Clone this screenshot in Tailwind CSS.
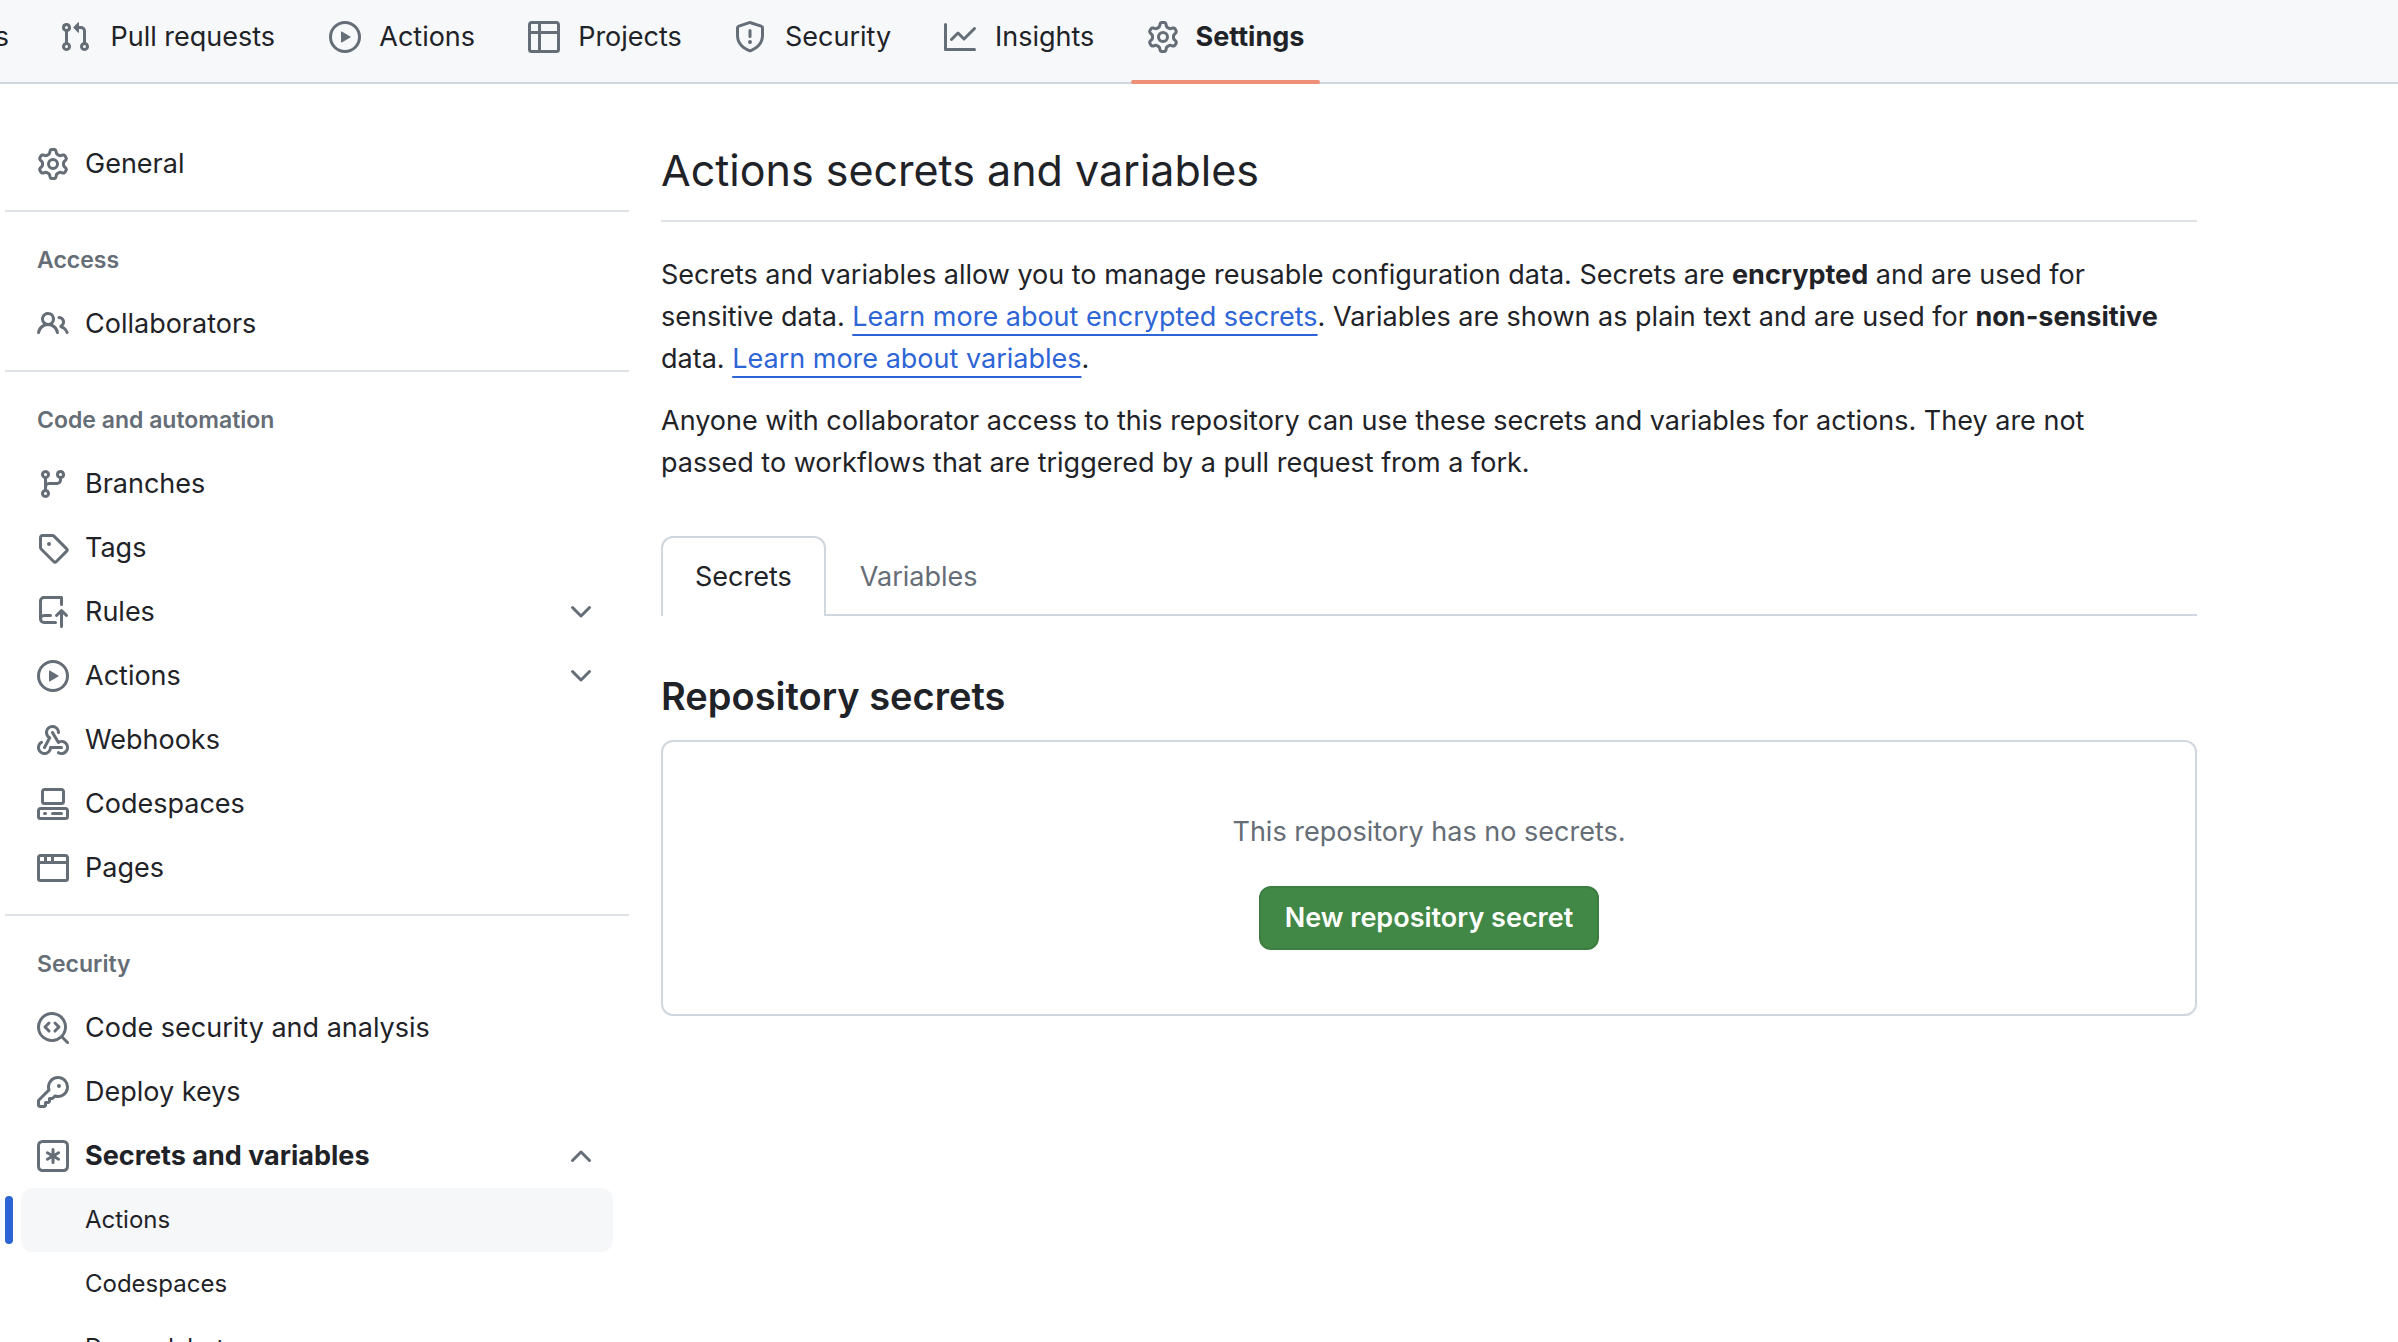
<!DOCTYPE html>
<html lang="en">

<head>
    <meta charset="UTF-8">
    <meta name="viewport" content="width=device-width, initial-scale=1.0">
    <title>Actions secrets and variables</title>
    <script src="https://cdn.jsdelivr.net/npm/@tailwindcss/browser@4"></script>
</head>

<body class="h-screen overflow-hidden bg-white font-['Inter','Liberation_Sans',sans-serif] text-[27px] leading-[42px] text-[#1f2328]">

    <!-- Icon sprite -->
    <svg class="hidden" aria-hidden="true">
        <symbol id="gear" viewBox="0 0 16 16"><path d="M8 0a8.2 8.2 0 0 1 .701.031C9.444.095 9.99.645 10.16 1.29l.288 1.107c.018.066.079.158.212.224.231.114.454.243.668.386.123.082.233.09.299.071l1.103-.303c.644-.176 1.392.021 1.82.63.27.385.506.792.704 1.218.315.675.111 1.422-.364 1.891l-.814.806c-.049.048-.098.147-.088.294.016.257.016.515 0 .772-.01.147.038.246.088.294l.814.806c.475.469.679 1.216.364 1.891a7.977 7.977 0 0 1-.704 1.217c-.428.61-1.176.807-1.82.63l-1.102-.302c-.067-.019-.177-.011-.3.071a5.909 5.909 0 0 1-.668.386c-.133.066-.194.158-.211.224l-.29 1.106c-.168.646-.715 1.196-1.458 1.26a8.006 8.006 0 0 1-1.402 0c-.743-.064-1.289-.614-1.458-1.26l-.289-1.106c-.018-.066-.079-.158-.212-.224a5.738 5.738 0 0 1-.668-.386c-.123-.082-.233-.09-.299-.071l-1.103.303c-.644.176-1.392-.021-1.82-.63a8.12 8.12 0 0 1-.704-1.218c-.315-.675-.111-1.422.363-1.891l.815-.806c.05-.048.098-.147.088-.294a6.214 6.214 0 0 1 0-.772c.01-.147-.038-.246-.088-.294l-.815-.806C.635 6.045.431 5.298.746 4.623a7.92 7.92 0 0 1 .704-1.217c.428-.61 1.176-.807 1.82-.63l1.102.302c.067.019.177.011.3-.071.214-.143.437-.272.668-.386.133-.066.194-.158.211-.224l.29-1.106C6.009.645 6.556.095 7.299.03 7.53.01 7.764 0 8 0Zm-.571 1.525c-.036.003-.108.036-.137.146l-.289 1.105c-.147.561-.549.967-.998 1.189-.173.086-.34.183-.5.29-.417.278-.97.423-1.529.27l-1.103-.303c-.109-.03-.175.016-.195.045-.22.312-.412.644-.573.99-.014.031-.021.11.059.19l.815.806c.411.406.562.957.53 1.456a4.709 4.709 0 0 0 0 .582c.032.499-.119 1.05-.53 1.456l-.815.806c-.081.08-.073.159-.059.19.162.346.353.677.573.989.02.03.085.076.195.046l1.102-.303c.56-.153 1.113-.008 1.53.27.161.107.328.204.501.29.447.222.85.629.997 1.189l.289 1.105c.029.109.101.143.137.146a6.6 6.6 0 0 0 1.142 0c.036-.003.108-.036.137-.146l.289-1.105c.147-.561.549-.967.998-1.189.173-.086.34-.183.5-.29.417-.278.97-.423 1.529-.27l1.103.303c.109.029.175-.016.195-.045.22-.313.411-.644.573-.99.014-.031.021-.11-.059-.19l-.815-.806c-.411-.406-.562-.957-.53-1.456a4.709 4.709 0 0 0 0-.582c-.032-.499.119-1.05.53-1.456l.815-.806c.081-.08.073-.159.059-.19a6.464 6.464 0 0 0-.573-.989c-.02-.03-.085-.076-.195-.046l-1.102.303c-.56.153-1.113.008-1.53-.27a4.44 4.44 0 0 0-.501-.29c-.447-.222-.85-.629-.997-1.189l-.289-1.105c-.029-.11-.101-.143-.137-.146a6.6 6.6 0 0 0-1.142 0ZM11 8a3 3 0 1 1-6 0 3 3 0 0 1 6 0ZM9.5 8a1.5 1.5 0 1 0-3.001.001A1.5 1.5 0 0 0 9.5 8Z" /></symbol>
        <symbol id="pull-request" viewBox="0 0 16 16"><path d="M1.5 3.25a2.25 2.25 0 1 1 3 2.122v5.256a2.251 2.251 0 1 1-1.5 0V5.372A2.25 2.25 0 0 1 1.5 3.25Zm5.677-.177L9.573.677A.25.25 0 0 1 10 .854V2.5h1A2.5 2.5 0 0 1 13.5 5v5.628a2.251 2.251 0 1 1-1.5 0V5a1 1 0 0 0-1-1h-1v1.646a.25.25 0 0 1-.427.177L7.177 3.427a.25.25 0 0 1 0-.354ZM3.75 2.5a.75.75 0 1 0 0 1.5.75.75 0 0 0 0-1.5Zm0 9.5a.75.75 0 1 0 0 1.5.75.75 0 0 0 0-1.5Zm8.25.75a.75.75 0 1 0 1.5 0 .75.75 0 0 0-1.5 0Z" /></symbol>
        <symbol id="play" viewBox="0 0 16 16"><path d="M8 0a8 8 0 1 1 0 16A8 8 0 0 1 8 0ZM1.5 8a6.5 6.5 0 1 0 13 0 6.5 6.5 0 0 0-13 0Zm4.879-2.773 4.264 2.559a.25.25 0 0 1 0 .428l-4.264 2.559A.25.25 0 0 1 6 10.559V5.442a.25.25 0 0 1 .379-.215Z" /></symbol>
        <symbol id="table" viewBox="0 0 16 16"><path d="M0 1.75C0 .784.784 0 1.75 0h12.5C15.216 0 16 .784 16 1.75v12.5A1.75 1.75 0 0 1 14.25 16H1.75A1.75 1.75 0 0 1 0 14.25ZM6.5 6.5v8h7.75a.25.25 0 0 0 .25-.25V6.5Zm8-1.5V1.75a.25.25 0 0 0-.25-.25H6.5V5Zm-13 1.5v7.75c0 .138.112.25.25.25H5v-8ZM5 5V1.5H1.75a.25.25 0 0 0-.25.25V5Z" /></symbol>
        <symbol id="shield" viewBox="0 0 16 16"><path d="M7.467.133a1.748 1.748 0 0 1 1.066 0l5.25 1.68A1.75 1.75 0 0 1 15 3.48V7c0 1.566-.32 3.182-1.303 4.682-.983 1.498-2.585 2.813-5.032 3.855a1.697 1.697 0 0 1-1.33 0c-2.447-1.042-4.049-2.357-5.032-3.855C1.32 10.182 1 8.566 1 7V3.48a1.75 1.75 0 0 1 1.217-1.667Zm.61 1.429a.25.25 0 0 0-.153 0l-5.25 1.68a.25.25 0 0 0-.174.238V7c0 1.358.275 2.666 1.057 3.86.784 1.194 2.121 2.34 4.366 3.297a.196.196 0 0 0 .154 0c2.245-.956 3.582-2.104 4.366-3.298C13.225 9.666 13.5 8.36 13.5 7V3.48a.251.251 0 0 0-.174-.237l-5.25-1.68ZM8.75 4.75v3a.75.75 0 0 1-1.5 0v-3a.75.75 0 0 1 1.5 0ZM9 10.5a1 1 0 1 1-2 0 1 1 0 0 1 2 0Z" /></symbol>
        <symbol id="graph" viewBox="0 0 16 16"><path d="M1.5 1.75V13.5h13.75a.75.75 0 0 1 0 1.5H.75a.75.75 0 0 1-.75-.75V1.75a.75.75 0 0 1 1.5 0Zm14.28 2.53-5.25 5.25a.75.75 0 0 1-1.06 0L7 7.06 4.28 9.78a.751.751 0 0 1-1.042-.018.751.751 0 0 1-.018-1.042l3.25-3.25a.75.75 0 0 1 1.06 0L10 7.94l4.72-4.72a.751.751 0 0 1 1.042.018.751.751 0 0 1 .018 1.042Z" /></symbol>
        <symbol id="people" viewBox="0 0 16 16"><path d="M2 5.5a3.5 3.5 0 1 1 5.898 2.549 5.508 5.508 0 0 1 3.034 4.084.75.75 0 1 1-1.482.235 4 4 0 0 0-7.9 0 .75.75 0 0 1-1.482-.236A5.507 5.507 0 0 1 3.102 8.05 3.493 3.493 0 0 1 2 5.5ZM11 4a3.001 3.001 0 0 1 2.22 5.018 5.01 5.01 0 0 1 2.56 3.012.749.749 0 0 1-.885.954.752.752 0 0 1-.549-.514 3.507 3.507 0 0 0-2.522-2.372.75.75 0 0 1-.574-.73v-.352a.75.75 0 0 1 .416-.672A1.5 1.5 0 0 0 11 5.5.75.75 0 0 1 11 4Zm-5.5-.5a2 2 0 1 0-.001 3.999A2 2 0 0 0 5.5 3.5Z" /></symbol>
        <symbol id="branch" viewBox="0 0 16 16"><path d="M9.5 3.25a2.25 2.25 0 1 1 3 2.122V6A2.5 2.5 0 0 1 10 8.5H6a1 1 0 0 0-1 1v1.128a2.251 2.251 0 1 1-1.5 0V5.372a2.25 2.25 0 1 1 1.5 0v1.836A2.493 2.493 0 0 1 6 7h4a1 1 0 0 0 1-1v-.628A2.25 2.25 0 0 1 9.5 3.25Zm-6 0a.75.75 0 1 0 1.5 0 .75.75 0 0 0-1.5 0Zm8.25-.75a.75.75 0 1 0 0 1.5.75.75 0 0 0 0-1.5ZM4.25 12a.75.75 0 1 0 0 1.5.75.75 0 0 0 0-1.5Z" /></symbol>
        <symbol id="tag" viewBox="0 0 16 16"><path d="M1 7.775V2.75C1 1.784 1.784 1 2.75 1h5.025c.464 0 .91.184 1.238.513l6.25 6.25a1.75 1.75 0 0 1 0 2.474l-5.026 5.026a1.75 1.75 0 0 1-2.474 0l-6.25-6.25A1.752 1.752 0 0 1 1 7.775Zm1.5 0c0 .066.026.13.073.177l6.25 6.25a.25.25 0 0 0 .354 0l5.025-5.025a.25.25 0 0 0 0-.354l-6.25-6.25a.25.25 0 0 0-.177-.073H2.75a.25.25 0 0 0-.25.25ZM6 5a1 1 0 1 1 0 2 1 1 0 0 1 0-2Z" /></symbol>
        <symbol id="repo-push" viewBox="0 0 16 16"><path d="M1 2.5A2.5 2.5 0 0 1 3.5 0h8.75a.75.75 0 0 1 .75.75v3.5a.75.75 0 0 1-1.5 0V1.5h-8a1 1 0 0 0-1 1v6.708A2.493 2.493 0 0 1 3.5 9h3.25a.75.75 0 0 1 0 1.5H3.5a1 1 0 0 0 0 2h5.75a.75.75 0 0 1 0 1.5H3.5A2.5 2.5 0 0 1 1 11.5Zm13.23 7.79h-.001l-1.224-1.224v6.184a.75.75 0 0 1-1.5 0V9.066L10.28 10.29a.75.75 0 0 1-1.06-1.061l2.505-2.504a.75.75 0 0 1 1.06 0L15.29 9.23a.751.751 0 0 1-.018 1.042.751.751 0 0 1-1.042.018Z" /></symbol>
        <symbol id="webhook" viewBox="0 0 16 16"><path d="M5.5 4.25a2.25 2.25 0 0 1 4.5 0 .75.75 0 0 0 1.5 0 3.75 3.75 0 1 0-6.14 2.889l-2.272 4.258a.75.75 0 0 0 1.324.706L7 7.25a.75.75 0 0 0-.309-1.015A2.25 2.25 0 0 1 5.5 4.25Z" /><path d="M7.364 3.607a.75.75 0 0 1 1.03.257l2.608 4.349a3.75 3.75 0 1 1-.628 6.785.75.75 0 0 1 .752-1.299 2.25 2.25 0 1 0-.033-3.88.75.75 0 0 1-1.03-.256L7.107 4.636a.75.75 0 0 1 .257-1.03Z" /><path d="M2.9 8.776A.75.75 0 0 1 2.625 9.8 2.25 2.25 0 1 0 6 11.75a.75.75 0 0 1 .75-.751h5.5a.75.75 0 0 1 0 1.5H7.425a3.751 3.751 0 1 1-5.55-3.998.75.75 0 0 1 1.024.274Z" /></symbol>
        <symbol id="codespaces" viewBox="0 0 16 16"><path d="M0 11.25c0-.966.784-1.75 1.75-1.75h12.5c.966 0 1.75.784 1.75 1.75v3A1.75 1.75 0 0 1 14.25 16H1.75A1.75 1.75 0 0 1 0 14.25Zm2-9.5C2 .784 2.784 0 3.75 0h8.5C13.216 0 14 .784 14 1.75v5a1.75 1.75 0 0 1-1.75 1.75h-8.5A1.75 1.75 0 0 1 2 6.75Zm1.75-.25a.25.25 0 0 0-.25.25v5c0 .138.112.25.25.25h8.5a.25.25 0 0 0 .25-.25v-5a.25.25 0 0 0-.25-.25Zm-2 9.5a.25.25 0 0 0-.25.25v3c0 .138.112.25.25.25h12.5a.25.25 0 0 0 .25-.25v-3a.25.25 0 0 0-.25-.25Z" /><path d="M7 12.75a.75.75 0 0 1 .75-.75h4.5a.75.75 0 0 1 0 1.5h-4.5a.75.75 0 0 1-.75-.75Zm-4 0a.75.75 0 0 1 .75-.75h.5a.75.75 0 0 1 0 1.5h-.5a.75.75 0 0 1-.75-.75Z" /></symbol>
        <symbol id="browser" viewBox="0 0 16 16"><path d="M0 2.75C0 1.784.784 1 1.75 1h12.5c.966 0 1.75.784 1.75 1.75v10.5A1.75 1.75 0 0 1 14.25 15H1.75A1.75 1.75 0 0 1 0 13.25ZM14.5 6h-13v7.25c0 .138.112.25.25.25h12.5a.25.25 0 0 0 .25-.25Zm-6-3.5v2h6V2.75a.25.25 0 0 0-.25-.25ZM5 2.5v2h2v-2Zm-3.25 0a.25.25 0 0 0-.25.25V4.5h2v-2Z" /></symbol>
        <symbol id="codescan" viewBox="0 0 16 16"><path d="M8.47 4.97a.75.75 0 0 0 0 1.06L9.94 7.5 8.47 8.97a.75.75 0 1 0 1.06 1.06l2-2a.75.75 0 0 0 0-1.06l-2-2a.75.75 0 0 0-1.06 0ZM6.53 6.03a.75.75 0 0 0-1.06-1.06l-2 2a.75.75 0 0 0 0 1.06l2 2a.75.75 0 1 0 1.06-1.06L5.06 7.5l1.47-1.47Z" /><path d="M12.246 13.307a7.501 7.501 0 1 1 1.06-1.06l2.474 2.473a.749.749 0 0 1-.326 1.275.749.749 0 0 1-.734-.215ZM1.5 7.5a6.002 6.002 0 0 0 3.608 5.504 6.002 6.002 0 0 0 6.486-1.117.748.748 0 0 1 .292-.293A6 6 0 1 0 1.5 7.5Z" /></symbol>
        <symbol id="key" viewBox="0 0 16 16"><path d="M10.5 0a5.499 5.499 0 1 1-1.288 10.848l-.932.932a.749.749 0 0 1-.53.22H7v.75a.749.749 0 0 1-.22.53l-.5.5a.749.749 0 0 1-.53.22H5v.75a.749.749 0 0 1-.22.53l-.5.5a.749.749 0 0 1-.53.22h-2A1.75 1.75 0 0 1 0 14.25v-2c0-.199.079-.389.22-.53l4.932-4.932A5.5 5.5 0 0 1 10.5 0Zm-4 5.5c-.001.431.069.86.205 1.269a.75.75 0 0 1-.181.768L1.5 12.56v1.69c0 .138.112.25.25.25h1.69l.06-.06v-1.19a.75.75 0 0 1 .75-.75h1.19l.06-.06v-1.19a.75.75 0 0 1 .75-.75h1.19l1.023-1.025a.75.75 0 0 1 .768-.18A4 4 0 1 0 6.5 5.5ZM11 6a1 1 0 1 1 0-2 1 1 0 0 1 0 2Z" /></symbol>
        <symbol id="asterisk" viewBox="0 0 16 16"><path d="M0 2.75A2.75 2.75 0 0 1 2.75 0h10.5A2.75 2.75 0 0 1 16 2.75v10.5A2.75 2.75 0 0 1 13.25 16H2.75A2.75 2.75 0 0 1 0 13.25ZM2.75 1.5c-.69 0-1.25.56-1.25 1.25v10.5c0 .69.56 1.25 1.25 1.25h10.5c.69 0 1.25-.56 1.25-1.25V2.75c0-.69-.56-1.25-1.25-1.25Z" /><path d="M8 4a.75.75 0 0 1 .75.75V6.7l1.69-.975a.75.75 0 0 1 .75 1.3L9.5 8l1.69.976a.75.75 0 0 1-.75 1.298L8.75 9.3v1.951a.75.75 0 0 1-1.5 0V9.299l-1.69.976a.75.75 0 0 1-.75-1.3L6.5 8l-1.69-.975a.75.75 0 0 1 .75-1.3l1.69.976V4.75A.75.75 0 0 1 8 4Z" /></symbol>
        <symbol id="chevron" viewBox="0 0 16 16"><path d="M12.78 5.22a.749.749 0 0 1 0 1.06l-4.25 4.25a.749.749 0 0 1-1.06 0L3.22 6.28a.749.749 0 1 1 1.06-1.06L8 8.939l3.72-3.719a.749.749 0 0 1 1.06 0Z" /></symbol>
    </svg>

    <!-- Repository nav -->
    <header class="h-[84px] border-b-2 border-[#d0d7de] bg-[#f6f8fa]">
        <nav class="-ml-[126px] flex h-[84px] gap-[18px] whitespace-nowrap" aria-label="Repository">
            <a href="#" class="flex w-[151px] items-center justify-end px-4 pb-[11px]">Issues</a>
            <a href="#" class="flex items-center gap-4 px-4 pb-[11px]">
                <svg class="size-8 fill-[#656d76]"><use href="#pull-request" /></svg>
                <span data-content="Pull requests" class="text-center before:invisible before:block before:h-0 before:font-bold before:content-[attr(data-content)]">Pull requests</span>
            </a>
            <a href="#" class="flex items-center gap-4 px-4 pb-[11px]">
                <svg class="size-8 fill-[#656d76]"><use href="#play" /></svg>
                <span data-content="Actions" class="text-center before:invisible before:block before:h-0 before:font-bold before:content-[attr(data-content)]">Actions</span>
            </a>
            <a href="#" class="flex items-center gap-4 px-4 pb-[11px]">
                <svg class="size-8 fill-[#656d76]"><use href="#table" /></svg>
                <span data-content="Projects" class="text-center before:invisible before:block before:h-0 before:font-bold before:content-[attr(data-content)]">Projects</span>
            </a>
            <a href="#" class="flex items-center gap-4 px-4 pb-[11px]">
                <svg class="size-8 fill-[#656d76]"><use href="#shield" /></svg>
                <span data-content="Security" class="text-center before:invisible before:block before:h-0 before:font-bold before:content-[attr(data-content)]">Security</span>
            </a>
            <a href="#" class="flex items-center gap-4 px-4 pb-[11px]">
                <svg class="size-8 fill-[#656d76]"><use href="#graph" /></svg>
                <span data-content="Insights" class="text-center before:invisible before:block before:h-0 before:font-bold before:content-[attr(data-content)]">Insights</span>
            </a>
            <a href="#" aria-current="page" class="relative flex items-center gap-4 px-4 pb-[11px] font-bold after:absolute after:inset-x-0 after:bottom-0 after:h-1 after:rounded-sm after:bg-[#ee9078]">
                <svg class="size-8 fill-[#656d76]"><use href="#gear" /></svg>
                Settings
            </a>
        </nav>
    </header>

    <div class="flex gap-8 px-[5px]">

        <!-- Settings sidebar -->
        <nav class="w-[624px] shrink-0 pt-12" aria-label="Settings">
            <a href="#" class="flex h-16 items-center gap-4 px-8">
                <svg class="size-8 fill-[#656d76]"><use href="#gear" /></svg>General
            </a>

            <hr class="mt-[14px] mb-4 border-t-2 border-[#dfe2e7]">
            <h3 class="flex h-16 items-center px-8 text-[23px] font-semibold text-[#656d76]">Access</h3>
            <a href="#" class="flex h-16 items-center gap-4 px-8">
                <svg class="size-8 fill-[#656d76]"><use href="#people" /></svg>Collaborators
            </a>

            <hr class="mt-[14px] mb-4 border-t-2 border-[#dfe2e7]">
            <h3 class="flex h-16 items-center px-8 text-[23px] font-semibold text-[#656d76]">Code and automation</h3>
            <a href="#" class="flex h-16 items-center gap-4 px-8">
                <svg class="size-8 fill-[#656d76]"><use href="#branch" /></svg>Branches
            </a>
            <a href="#" class="flex h-16 items-center gap-4 px-8">
                <svg class="size-8 fill-[#656d76]"><use href="#tag" /></svg>Tags
            </a>
            <button class="flex h-16 w-full items-center gap-4 px-8">
                <svg class="size-8 fill-[#656d76]"><use href="#repo-push" /></svg>Rules
                <svg class="ml-auto size-8 fill-[#656d76]"><use href="#chevron" /></svg>
            </button>
            <button class="flex h-16 w-full items-center gap-4 px-8">
                <svg class="size-8 fill-[#656d76]"><use href="#play" /></svg>Actions
                <svg class="ml-auto size-8 fill-[#656d76]"><use href="#chevron" /></svg>
            </button>
            <a href="#" class="flex h-16 items-center gap-4 px-8">
                <svg class="size-8 fill-[#656d76]"><use href="#webhook" /></svg>Webhooks
            </a>
            <a href="#" class="flex h-16 items-center gap-4 px-8">
                <svg class="size-8 fill-[#656d76]"><use href="#codespaces" /></svg>Codespaces
            </a>
            <a href="#" class="flex h-16 items-center gap-4 px-8">
                <svg class="size-8 fill-[#656d76]"><use href="#browser" /></svg>Pages
            </a>

            <hr class="mt-[14px] mb-4 border-t-2 border-[#dfe2e7]">
            <h3 class="flex h-16 items-center px-8 text-[23px] font-semibold text-[#656d76]">Security</h3>
            <a href="#" class="flex h-16 items-center gap-4 px-8">
                <svg class="size-8 fill-[#656d76]"><use href="#codescan" /></svg>Code security and analysis
            </a>
            <a href="#" class="flex h-16 items-center gap-4 px-8">
                <svg class="size-8 fill-[#656d76]"><use href="#key" /></svg>Deploy keys
            </a>
            <button class="flex h-16 w-full items-center gap-4 px-8 font-bold">
                <svg class="size-8 fill-[#656d76]"><use href="#asterisk" /></svg>Secrets and variables
                <svg class="ml-auto size-8 rotate-180 fill-[#656d76]"><use href="#chevron" /></svg>
            </button>
            <div class="px-4 text-2xl">
                <a href="#" aria-current="page" class="relative flex h-16 items-center rounded-xl bg-[#f6f7f9] pl-16 before:absolute before:top-2 before:-left-4 before:h-12 before:w-2 before:rounded-full before:bg-[#2e65d6]">Actions</a>
                <a href="#" class="flex h-16 items-center pl-16">Codespaces</a>
                <a href="#" class="flex h-16 items-center pl-16">Dependabot</a>
            </div>
        </nav>

        <!-- Page content -->
        <main class="max-w-[1536px] flex-1 pt-[50px]">
            <h1 class="border-b-2 border-[#dfe2e7] pb-[14px] text-[43px] leading-[72px]">Actions secrets and variables</h1>
            <p class="mt-8">
                Secrets and variables allow you to manage reusable configuration data. Secrets are <strong class="font-bold">encrypted</strong> and are used for sensitive data.
                <a href="#" class="text-[#2e65d6] underline decoration-2 underline-offset-8">Learn more about encrypted secrets</a>. Variables are shown as plain text and are used for <strong class="font-bold">non-sensitive</strong> data.
                <a href="#" class="text-[#2e65d6] underline decoration-2 underline-offset-8">Learn more about variables</a>.
            </p>
            <p class="mt-5 pr-6">Anyone with collaborator access to this repository can use these secrets and variables for actions. They are not passed to workflows that are triggered by a pull request from a fork.</p>

            <div class="mt-[52px] flex h-20 border-b-2 border-[#d0d7de]" role="tablist">
                <button role="tab" aria-selected="true" class="-mb-[2px] rounded-t-xl border-2 border-b-0 border-[#d0d7de] bg-white px-8">Secrets</button>
                <button role="tab" aria-selected="false" class="-mb-[2px] border-2 border-b-0 border-transparent px-8 text-[#656d76]">Variables</button>
            </div>

            <h2 class="mt-[50px] mb-[14px] text-[38px] leading-[60px] font-semibold">Repository secrets</h2>
            <div class="flex flex-col items-center gap-8 rounded-xl border-2 border-[#d0d7de] pt-[68px] pb-16">
                <p class="leading-[44px] text-[#656d76]">This repository has no secrets.</p>
                <button class="h-16 rounded-xl border-2 border-[#3d7d41] bg-[#418745] px-6 font-semibold text-white">New repository secret</button>
            </div>
        </main>
    </div>

</body>

</html>
